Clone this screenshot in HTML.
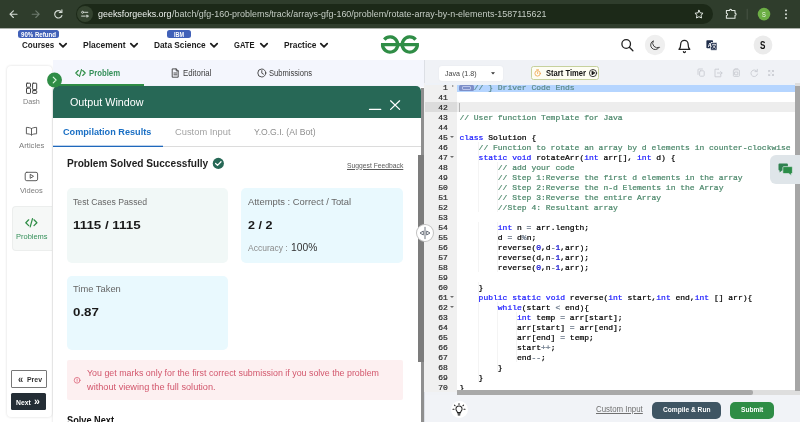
<!DOCTYPE html>
<html lang="en"><head><meta charset="utf-8"><title>Rotate Array | Practice | GeeksforGeeks</title>
<style>
*{box-sizing:border-box;margin:0;padding:0}
html,body{width:800px;height:422px;overflow:hidden;background:#fff;font-family:"Liberation Sans",sans-serif}
#root{position:absolute;left:0;top:0;width:800px;height:422px;overflow:hidden;will-change:transform}
.a{position:absolute}
.t{position:absolute;white-space:nowrap;line-height:1;transform-origin:0 50%;display:block}
svg{position:absolute;overflow:visible}
#chrome{left:0;top:0;width:800px;height:28.4px;background:#2f3d2c}
#pill{left:76.3px;top:4.2px;width:637px;height:19.8px;border-radius:10px;background:#1c2918}
#nav{left:0;top:29px;width:800px;height:31px;background:#fff}
#side{left:6.6px;top:66.4px;width:45.2px;height:350.4px;background:#fff;border-radius:4px;box-shadow:0 0 2.5px rgba(0,0,0,.16)}
#tabs{left:52.5px;top:59.6px;width:371.7px;height:27px;background:#f4f6fd}
#ow{left:52.5px;top:86px;width:368.6px;height:340px;background:#fff;border-radius:5px 5px 0 0;overflow:hidden;box-shadow:-1px 0 2px rgba(0,0,0,.07)}
#owh{left:0;top:0;width:100%;height:32.1px;background:#276856}
.card{border-radius:5px}
#ed{left:425px;top:83px;width:375px;height:312.4px;background:linear-gradient(90deg,#f0f2f6 32px,#fff 32px);overflow:hidden}
#gut{left:0;top:0;width:32px;height:308.6px;background:#f0f0f0}
.ln{position:absolute;left:0;width:375px;height:10px;white-space:pre;font-family:"Liberation Mono",monospace;font-size:8px;line-height:10px;color:#000;-webkit-text-stroke:0.22px}
.ln i{font-style:normal;position:absolute;top:1.1px;left:0;width:22.8px;text-align:right;color:#2a2a2a}
.ln b{font-weight:400;position:absolute;top:1.1px;left:34.4px}
.k{color:#1a1aff}.c{color:#4c886b}.n{color:#0000cd}.o{color:#687687}
.fold{position:absolute;left:25.4px;top:4.2px;width:0;height:0;border-left:2px solid transparent;border-right:2px solid transparent;border-top:2.8px solid #6e6e6e}
</style></head>
<body>
<div id="root">
<div class="a" id="chrome"></div><div class="a" style="left:0;top:28px;width:800px;height:1px;background:#acb1ab"></div><div class="a" id="pill"></div>
<div class="a" style="left:77px;top:6px;width:16.4px;height:16.4px;border-radius:50%;background:#34432f"></div>
<svg width="800" height="29" viewBox="0 0 800 29" style="left:0;top:0" fill="none" stroke-linecap="round" stroke-linejoin="round">
<g stroke="#d3dad3" stroke-width="1.15"><path d="M17 14.2H10.2M13.4 10.9L10 14.2l3.4 3.3"/></g>
<g stroke="#6d7a6d" stroke-width="1.15"><path d="M32.2 14.2H39M35.8 10.9l3.4 3.3-3.4 3.3"/></g>
<g stroke="#d3dad3" stroke-width="1.15"><path d="M61.500 12.300A3.700 3.700 0 1 0 61.900 15.500"/><path d="M61.900 9.900v2.600h-2.600" /></g>
<g stroke="#d3dad3" stroke-width="1"><path d="M84.6 12.3h3.2M81.6 16.1h3.2"/><circle cx="82.6" cy="12.3" r="1"/><circle cx="87" cy="16.1" r="1"/></g>
<path d="M699 10.3l1.25 2.55 2.8.4-2.03 1.97.48 2.78-2.5-1.32-2.5 1.32.48-2.78-2.03-1.97 2.8-.4z" stroke="#e2e8e2" stroke-width="1"/>
<path d="M726.400 10.500h3.100a1.100 1.100 0 0 1 2.200 0h3.300v2.600a1.100 1.100 0 0 1 0 2.200v3h-8.600v-2.800a1.100 1.100 0 0 0 0-2.200z" stroke="#dfe6df" stroke-width="1.050"/>
<path d="M747.2 9.2v10" stroke="#4c5a4b" stroke-width="0.8"/>
<circle cx="764" cy="14.1" r="6.3" fill="#6cae45"/>
<g fill="#e2e8e2"><circle cx="786" cy="10.4" r="0.95"/><circle cx="786" cy="14.2" r="0.95"/><circle cx="786" cy="18" r="0.95"/></g>
</svg>
<span class="t" style="left:97.90px;top:10.32px;font-size:8.6px;color:#eef2ee;transform:scaleX(1.0396);">geeksforgeeks.org</span>
<span class="t" style="left:171.60px;top:10.32px;font-size:8.6px;color:#c5cdc5;transform:scaleX(1.0400);">/batch/gfg-160-problems/track/arrays-gfg-160/problem/rotate-array-by-n-elements-1587115621</span>
<span class="t" style="left:762.10px;top:11.68px;font-size:6.4px;color:#eef7e8;transform:scaleX(0.8908);">S</span>
<div class="a" id="nav"></div>
<div class="a" style="left:17.5px;top:30px;width:41.5px;height:8.3px;border-radius:2.5px;background:#4161b8"></div>
<div class="a" style="left:167px;top:30px;width:23.5px;height:8.3px;border-radius:2.5px;background:#4161b8"></div>
<span class="t" style="left:20.60px;top:31.63px;font-size:6.7px;color:#fff;font-weight:700;transform:scaleX(0.9143);">90% Refund</span>
<span class="t" style="left:174.00px;top:31.63px;font-size:6.7px;color:#fff;font-weight:700;transform:scaleX(0.8153);">IBM</span>
<span class="t" style="left:21.60px;top:39.67px;font-size:9.6px;color:#1d1d1d;font-weight:700;transform:scaleX(0.8387);">Courses</span>
<svg width="10" height="8" style="left:59px;top:42px" fill="none"><path d="M0.8 1.7L4 4.9 7.2 1.7" stroke="#1d1d1d" stroke-width="1.8" stroke-linecap="round" stroke-linejoin="round"/></svg>
<span class="t" style="left:82.50px;top:39.67px;font-size:9.6px;color:#1d1d1d;font-weight:700;transform:scaleX(0.8854);">Placement</span>
<svg width="10" height="8" style="left:129.6px;top:42px" fill="none"><path d="M0.8 1.7L4 4.9 7.2 1.7" stroke="#1d1d1d" stroke-width="1.8" stroke-linecap="round" stroke-linejoin="round"/></svg>
<span class="t" style="left:153.80px;top:39.67px;font-size:9.6px;color:#1d1d1d;font-weight:700;transform:scaleX(0.8655);">Data Science</span>
<svg width="10" height="8" style="left:210px;top:42px" fill="none"><path d="M0.8 1.7L4 4.9 7.2 1.7" stroke="#1d1d1d" stroke-width="1.8" stroke-linecap="round" stroke-linejoin="round"/></svg>
<span class="t" style="left:234.00px;top:39.67px;font-size:9.6px;color:#1d1d1d;font-weight:700;transform:scaleX(0.7904);">GATE</span>
<svg width="10" height="8" style="left:260px;top:42px" fill="none"><path d="M0.8 1.7L4 4.9 7.2 1.7" stroke="#1d1d1d" stroke-width="1.8" stroke-linecap="round" stroke-linejoin="round"/></svg>
<span class="t" style="left:283.50px;top:39.67px;font-size:9.6px;color:#1d1d1d;font-weight:700;transform:scaleX(0.8703);">Practice</span>
<svg width="10" height="8" style="left:320.4px;top:42px" fill="none"><path d="M0.8 1.7L4 4.9 7.2 1.7" stroke="#1d1d1d" stroke-width="1.8" stroke-linecap="round" stroke-linejoin="round"/></svg>
<svg width="800" height="62" viewBox="0 0 800 62" style="left:0;top:0" fill="none" stroke="#2f8d46" stroke-width="3.3" stroke-linecap="butt">
<path d="M384.3 39.6A7.6 7.6 0 1 1 382.5 44.6"/>
<path d="M415.6 39.6A7.6 7.6 0 1 0 417.4 44.6"/>
<path d="M381 44.6H418.9"/>
</svg>
<svg width="800" height="62" viewBox="0 0 800 62" style="left:0;top:0" fill="none" stroke-linecap="round" stroke-linejoin="round">
<circle cx="655" cy="45" r="10.2" fill="#efefef"/>
<circle cx="763" cy="45" r="9.4" fill="#ebebeb"/>
<g stroke="#222" stroke-width="1.3"><circle cx="626.2" cy="44" r="4.3"/><path d="M629.4 47.2l3.5 3.5"/></g>
<path d="M659.2 47.4A4.6 4.6 0 0 1 653.400 40.800a4.600 4.600 0 1 0 5.800 6.600z" stroke="#444" stroke-width="1"/>
<g stroke="#222" stroke-width="1.25"><path d="M679 49.300h10.800c-1.400-1.100-1.700-2.400-1.700-5.300a3.700 3.700 0 0 0-7.400 0c0 2.900-.3 4.200-1.700 5.300z"/><path d="M683.400 51.500a1 1 0 0 0 2 0"/></g>
<g><rect x="706.4" y="40.3" width="6.6" height="8" rx="0.8" fill="#1f2d4a"/><rect x="710.6" y="42.6" width="6.4" height="7.6" rx="0.8" fill="#1f2d4a" stroke="#fff" stroke-width="0.7"/></g>
</svg>
<span class="t" style="left:707.80px;top:42.66px;font-size:5.6px;color:#fff;font-weight:700;">A</span>
<svg width="8" height="8" style="left:710px;top:42.4px" fill="none" stroke="#fff" stroke-width="0.7"><path d="M2 2.6h4M4 1.6v1M5.4 2.6C5 4.6 3.8 5.8 2.2 6.4M2.9 3.4C3.4 4.8 4.6 5.9 6 6.4"/></svg>
<span class="t" style="left:760.40px;top:40.53px;font-size:10px;color:#111;font-weight:700;transform:scaleX(0.8094);">S</span>
<div class="a" id="side"></div>
<div class="a" style="left:12.3px;top:206.4px;width:39.5px;height:44.3px;border-radius:4px 0 0 4px;background:#f6f8f7;border:0.6px solid #eceeed;border-right:0"></div>
<svg width="60" height="422" viewBox="0 0 60 422" style="left:0;top:0" fill="none" stroke-linecap="round" stroke-linejoin="round">
<g stroke="#444" stroke-width="1"><rect x="26.5" y="83.2" width="4" height="4" rx="0.6"/><rect x="32.600" y="83.2" width="4.100" height="6.400" rx="0.6"/><rect x="26.5" y="88.200" width="4" height="5.200" rx="0.6"/><rect x="32.600" y="90.600" width="4.100" height="2.800" rx="0.6"/></g>
<g stroke="#555" stroke-width="0.95"><path d="M31.5 128.6v6.4M31.5 128.6c-1.2-.9-3-1.2-5.1-1.2v6.4c2.100 0 3.900.3 5.100 1.200c1.200-.9 3-1.200 5.100-1.200v-6.400c-2.100 0-3.900.3-5.100 1.200z"/></g>
<g stroke="#555" stroke-width="0.95"><rect x="25.2" y="172.3" width="12.4" height="8.4" rx="1.6"/><path d="M30.200 174.700v3.600l3-1.800z"/></g>
<g stroke="#2f8d46" stroke-width="1.25"><path d="M28.7 219.800l-2.900 2.900 2.900 2.900M34 219.800l2.900 2.900-2.900 2.900M32.500 218.600l-2.300 8.200"/></g>
</svg>
<span class="t" style="left:22.90px;top:98.07px;font-size:7.6px;color:#7d7d7d;transform:scaleX(0.9530);">Dash</span>
<span class="t" style="left:18.50px;top:141.97px;font-size:7.6px;color:#7d7d7d;transform:scaleX(1.0198);">Articles</span>
<span class="t" style="left:19.90px;top:187.37px;font-size:7.6px;color:#7d7d7d;transform:scaleX(0.9873);">Videos</span>
<span class="t" style="left:15.60px;top:232.87px;font-size:7.6px;color:#35905a;transform:scaleX(0.9851);">Problems</span>
<div class="a" style="left:10.7px;top:370px;width:35.900px;height:17.900px;background:#fff;border:0.9px solid #777;border-radius:1px"></div>
<div class="a" style="left:11.1px;top:393.300px;width:35px;height:17.100px;background:#242d35;border-radius:1.5px"></div>
<span class="t" style="left:17.80px;top:373.51px;font-size:10.5px;color:#333;font-weight:700;transform:scaleX(0.8898);">«</span>
<span class="t" style="left:26.50px;top:375.83px;font-size:8px;color:#333;font-weight:700;transform:scaleX(0.8641);">Prev</span>
<span class="t" style="left:16.10px;top:398.53px;font-size:8px;color:#fff;font-weight:700;transform:scaleX(0.8476);">Next</span>
<span class="t" style="left:33.90px;top:396.21px;font-size:10.5px;color:#fff;font-weight:700;transform:scaleX(1.0096);">»</span>
<div class="a" id="tabs"></div>
<div class="a" style="left:52.5px;top:83.900px;width:91.500px;height:1.700px;background:#2f8d46"></div>
<svg width="430" height="90" viewBox="0 0 430 90" style="left:0;top:0" fill="none" stroke-linecap="round" stroke-linejoin="round">
<g stroke="#2f8d46" stroke-width="1.15"><path d="M78.300 70.500l-2.500 2.500 2.500 2.500M82.700 70.500l2.500 2.500-2.500 2.500M81.500 69.600l-2 6.800"/></g>
<g stroke="#333" stroke-width="0.85"><path d="M172.600 68.900h3.600l2 2v6.300h-5.600zM176.200 68.900v2h2M173.900 73h3M173.900 74.800h3"/></g>
<g stroke="#333" stroke-width="0.85"><circle cx="261.800" cy="73" r="4"/><path d="M261.800 70.600v2.600l1.700 1"/></g>
</svg>
<span class="t" style="left:88.50px;top:69.09px;font-size:8.4px;color:#35905a;font-weight:700;transform:scaleX(0.9279);">Problem</span>
<span class="t" style="left:183.00px;top:68.99px;font-size:8.4px;color:#3c3c3c;transform:scaleX(0.9384);">Editorial</span>
<span class="t" style="left:269.40px;top:68.99px;font-size:8.4px;color:#3c3c3c;transform:scaleX(0.9056);">Submissions</span>
<div class="a" id="ow"><div class="a" id="owh"></div><div class="a" style="left:0;top:60px;width:100%;height:0.9px;background:#dcdcdc"></div><div class="a" style="left:0;top:59px;width:110.100px;height:1px;background:rgba(31,104,188,.3)"></div><div class="a" style="left:0;top:60px;width:110.100px;height:1px;background:#1f68bc"></div><div class="a card" style="left:14.600px;top:102.300px;width:161.300px;height:74.300px;background:#f1f8f7"></div><div class="a card" style="left:188.800px;top:102.300px;width:161.600px;height:74.300px;background:#e9f9fe"></div><div class="a card" style="left:14.600px;top:189.600px;width:161.300px;height:74.800px;background:#e9f9fe"></div><div class="a" style="left:14.600px;top:274px;width:335.800px;height:40.300px;background:#fdf0f1;border-radius:2px"></div></div>
<span class="t" style="left:70.10px;top:97.11px;font-size:10.5px;color:#fff;transform:scaleX(1.0251);">Output Window</span>
<svg width="430" height="422" viewBox="0 0 430 422" style="left:0;top:0" fill="none" stroke-linecap="round" stroke-linejoin="round">
<path d="M369.400 109.400h11.400" stroke="#fff" stroke-width="1.100"/>
<path d="M390.600 100.800l9 8.600M399.600 100.800l-9 8.600" stroke="#fff" stroke-width="1.250"/>
<circle cx="218.300" cy="163.400" r="5.600" fill="#276856"/>
<path d="M215.600 163.500l1.900 1.900 3.500-3.700" stroke="#fff" stroke-width="1.300"/>
<circle cx="77.100" cy="380.300" r="2.900" stroke="#d9536a" stroke-width="0.700"/>
<path d="M77.100 379v1.500M77.100 381.700v.1" stroke="#d9536a" stroke-width="0.700"/>
</svg>
<span class="t" style="left:63.00px;top:127.00px;font-size:9.8px;color:#1a6fc4;font-weight:700;transform:scaleX(0.9322);">Compilation Results</span>
<span class="t" style="left:174.90px;top:127.00px;font-size:9.8px;color:#a3a3a3;transform:scaleX(0.9525);">Custom Input</span>
<span class="t" style="left:253.90px;top:127.00px;font-size:9.8px;color:#8e8e8e;transform:scaleX(0.8778);">Y.O.G.I. (AI Bot)</span>
<span class="t" style="left:67.10px;top:158.88px;font-size:10.3px;color:#1f1f1f;font-weight:700;transform:scaleX(0.9830);">Problem Solved Successfully</span>
<span class="t" style="left:346.60px;top:161.50px;font-size:7.8px;color:#5a5a5a;transform:scaleX(0.8657);text-decoration:underline;text-decoration-thickness:0.6px;text-underline-offset:1px;">Suggest Feedback</span>
<span class="t" style="left:73.40px;top:196.97px;font-size:9.6px;color:#666;transform:scaleX(0.9023);">Test Cases Passed</span>
<span class="t" style="left:73.40px;top:219.00px;font-size:11.7px;color:#1a1a1a;font-weight:700;transform:scaleX(1.1424);">1115 / 1115</span>
<span class="t" style="left:247.60px;top:196.97px;font-size:9.6px;color:#666;transform:scaleX(0.9773);">Attempts : Correct / Total</span>
<span class="t" style="left:247.60px;top:219.00px;font-size:11.7px;color:#1a1a1a;font-weight:700;transform:scaleX(1.0725);">2 / 2</span>
<span class="t" style="left:247.60px;top:243.95px;font-size:8.8px;color:#8a8a8a;transform:scaleX(0.9665);">Accuracy :</span>
<span class="t" style="left:291.00px;top:242.68px;font-size:10.3px;color:#333;">100%</span>
<span class="t" style="left:73.40px;top:284.27px;font-size:9.6px;color:#666;transform:scaleX(0.9743);">Time Taken</span>
<span class="t" style="left:73.40px;top:306.40px;font-size:11.7px;color:#1a1a1a;font-weight:700;transform:scaleX(1.1385);">0.87</span>
<span class="t" style="left:87.00px;top:369.08px;font-size:9px;color:#d2566c;transform:scaleX(0.9855);">You get marks only for the first correct submission if you solve the problem</span>
<span class="t" style="left:87.00px;top:383.08px;font-size:9px;color:#d2566c;transform:scaleX(1.0200);">without viewing the full solution.</span>
<span class="t" style="left:67.10px;top:415.78px;font-size:10.3px;color:#111;font-weight:700;transform:scaleX(0.8926);">Solve Next</span>
<svg width="20" height="20" viewBox="0 0 20 20" style="left:44.1px;top:70.4px" fill="none" stroke-linecap="round" stroke-linejoin="round"><circle cx="10.5" cy="10" r="7.45" fill="#2f8d46"/><path d="M9.200 7.100l2.900 2.900-2.900 2.900" stroke="#d9f7dd" stroke-width="1.100"/></svg>
<div class="a" style="left:421.400px;top:87.500px;width:2.900px;height:340px;background:#8f8f8f"></div>
<div class="a" style="left:418.400px;top:155.200px;width:5.900px;height:206.600px;background:#7c7c7c"></div>
<div class="a" style="left:424.2px;top:59.6px;width:376px;height:363px;background:#f0f2f6;border-left:0.8px solid #dcdfe5"></div>
<div class="a" style="left:439.400px;top:65.600px;width:63.200px;height:15.100px;background:#fff;border-radius:3px;box-shadow:0 0 2px rgba(0,0,0,.05)"></div>
<div class="a" style="left:531px;top:65.800px;width:67.600px;height:14.400px;background:#fdfdf3;border:0.8px solid #c6d19c;border-radius:2.500px"></div>
<span class="t" style="left:444.60px;top:69.90px;font-size:7.8px;color:#444;transform:scaleX(0.9114);">Java (1.8)</span>
<span class="t" style="left:546.00px;top:69.47px;font-size:8.3px;color:#111;font-weight:700;transform:scaleX(0.9140);">Start Timer</span>
<svg width="800" height="90" viewBox="0 0 800 90" style="left:0;top:0" fill="none" stroke-linecap="round" stroke-linejoin="round">
<path d="M491 72.200h4l-2 2.300z" fill="#333" stroke="none"/>
<g stroke="#f0a24a" stroke-width="0.800"><circle cx="537.600" cy="73.400" r="2.700"/><path d="M536.600 69.800h2M537.600 72v1.500"/></g>
<g stroke="#111" stroke-width="0.800"><circle cx="593" cy="73.100" r="3.600"/><path d="M592 71.400v3.400l2.600-1.700z" fill="#111"/></g>
<g stroke="#c9ccd2" stroke-width="0.900">
<rect x="699.600" y="70.800" width="4.600" height="5.400" rx="0.800"/><path d="M698 74.400v-4.600a.8.800 0 0 1 .8-.8h3.600"/>
<path d="M718.400 69.200h-3.400v7.600h5.800v-2.200M718.400 69.200v0M717.400 73h4.600M720.600 71.600l1.500 1.400-1.500 1.400"/>
<rect x="733.400" y="69.800" width="6" height="6.600" rx="0.800"/><rect x="735" y="72" width="2.800" height="2.800"/><path d="M735 68.800h2.800"/>
<path d="M757 71.400a3.300 3.300 0 1 0 .5 2.600M757.300 69.300v2.300h-2.300"/>
<path d="M768.800 70.600l1.400 1.400M773.400 70.600l-1.400 1.400M768.800 75.400l1.400-1.400M773.400 75.400l-1.400-1.400M768.700 71.700v-1.200h1.200M772.300 70.500h1.200v1.200M768.700 74.300v1.200h1.200M772.300 75.500h1.200v-1.200"/>
</g>
</svg>
<div class="a" style="left:424.200px;top:83px;width:1.200px;height:308.600px;background:#f0f0f0"></div><div class="a" id="ed"><div class="a" id="gut"></div><div class="a" style="left:32px;top:1.900px;width:338.200px;height:7px;background:#b5d5ff"></div><div class="a" style="left:0;top:19.25px;width:32px;height:10.0px;background:#dcdcdc"></div><div class="a" style="left:32px;top:19.25px;width:338.200px;height:10.0px;background:#ededed"></div><div class="a" style="left:33.800px;top:19.75px;width:0.700px;height:9.0px;background:#b4b4b4"></div><div class="a" style="left:53.00px;top:59.25px;width:0.6px;height:10.0px;background:rgba(0,0,0,.045)"></div><div class="a" style="left:53.00px;top:69.25px;width:0.6px;height:10.0px;background:rgba(0,0,0,.045)"></div><div class="a" style="left:53.00px;top:79.25px;width:0.6px;height:10.0px;background:rgba(0,0,0,.045)"></div><div class="a" style="left:72.20px;top:79.25px;width:0.6px;height:10.0px;background:rgba(0,0,0,.045)"></div><div class="a" style="left:53.00px;top:89.25px;width:0.6px;height:10.0px;background:rgba(0,0,0,.045)"></div><div class="a" style="left:72.20px;top:89.25px;width:0.6px;height:10.0px;background:rgba(0,0,0,.045)"></div><div class="a" style="left:53.00px;top:99.25px;width:0.6px;height:10.0px;background:rgba(0,0,0,.045)"></div><div class="a" style="left:72.20px;top:99.25px;width:0.6px;height:10.0px;background:rgba(0,0,0,.045)"></div><div class="a" style="left:53.00px;top:109.25px;width:0.6px;height:10.0px;background:rgba(0,0,0,.045)"></div><div class="a" style="left:72.20px;top:109.25px;width:0.6px;height:10.0px;background:rgba(0,0,0,.045)"></div><div class="a" style="left:53.00px;top:119.25px;width:0.6px;height:10.0px;background:rgba(0,0,0,.045)"></div><div class="a" style="left:72.20px;top:119.25px;width:0.6px;height:10.0px;background:rgba(0,0,0,.045)"></div><div class="a" style="left:53.00px;top:139.25px;width:0.6px;height:10.0px;background:rgba(0,0,0,.045)"></div><div class="a" style="left:72.20px;top:139.25px;width:0.6px;height:10.0px;background:rgba(0,0,0,.045)"></div><div class="a" style="left:53.00px;top:149.25px;width:0.6px;height:10.0px;background:rgba(0,0,0,.045)"></div><div class="a" style="left:72.20px;top:149.25px;width:0.6px;height:10.0px;background:rgba(0,0,0,.045)"></div><div class="a" style="left:53.00px;top:159.25px;width:0.6px;height:10.0px;background:rgba(0,0,0,.045)"></div><div class="a" style="left:72.20px;top:159.25px;width:0.6px;height:10.0px;background:rgba(0,0,0,.045)"></div><div class="a" style="left:53.00px;top:169.25px;width:0.6px;height:10.0px;background:rgba(0,0,0,.045)"></div><div class="a" style="left:72.20px;top:169.25px;width:0.6px;height:10.0px;background:rgba(0,0,0,.045)"></div><div class="a" style="left:53.00px;top:179.25px;width:0.6px;height:10.0px;background:rgba(0,0,0,.045)"></div><div class="a" style="left:72.20px;top:179.25px;width:0.6px;height:10.0px;background:rgba(0,0,0,.045)"></div><div class="a" style="left:53.00px;top:199.25px;width:0.6px;height:10.0px;background:rgba(0,0,0,.045)"></div><div class="a" style="left:53.00px;top:209.25px;width:0.6px;height:10.0px;background:rgba(0,0,0,.045)"></div><div class="a" style="left:53.00px;top:219.25px;width:0.6px;height:10.0px;background:rgba(0,0,0,.045)"></div><div class="a" style="left:72.20px;top:219.25px;width:0.6px;height:10.0px;background:rgba(0,0,0,.045)"></div><div class="a" style="left:53.00px;top:229.25px;width:0.6px;height:10.0px;background:rgba(0,0,0,.045)"></div><div class="a" style="left:72.20px;top:229.25px;width:0.6px;height:10.0px;background:rgba(0,0,0,.045)"></div><div class="a" style="left:91.40px;top:229.25px;width:0.6px;height:10.0px;background:rgba(0,0,0,.045)"></div><div class="a" style="left:53.00px;top:239.25px;width:0.6px;height:10.0px;background:rgba(0,0,0,.045)"></div><div class="a" style="left:72.20px;top:239.25px;width:0.6px;height:10.0px;background:rgba(0,0,0,.045)"></div><div class="a" style="left:91.40px;top:239.25px;width:0.6px;height:10.0px;background:rgba(0,0,0,.045)"></div><div class="a" style="left:53.00px;top:249.25px;width:0.6px;height:10.0px;background:rgba(0,0,0,.045)"></div><div class="a" style="left:72.20px;top:249.25px;width:0.6px;height:10.0px;background:rgba(0,0,0,.045)"></div><div class="a" style="left:91.40px;top:249.25px;width:0.6px;height:10.0px;background:rgba(0,0,0,.045)"></div><div class="a" style="left:53.00px;top:259.25px;width:0.6px;height:10.0px;background:rgba(0,0,0,.045)"></div><div class="a" style="left:72.20px;top:259.25px;width:0.6px;height:10.0px;background:rgba(0,0,0,.045)"></div><div class="a" style="left:91.40px;top:259.25px;width:0.6px;height:10.0px;background:rgba(0,0,0,.045)"></div><div class="a" style="left:53.00px;top:269.25px;width:0.6px;height:10.0px;background:rgba(0,0,0,.045)"></div><div class="a" style="left:72.20px;top:269.25px;width:0.6px;height:10.0px;background:rgba(0,0,0,.045)"></div><div class="a" style="left:91.40px;top:269.25px;width:0.6px;height:10.0px;background:rgba(0,0,0,.045)"></div><div class="a" style="left:53.00px;top:279.25px;width:0.6px;height:10.0px;background:rgba(0,0,0,.045)"></div><div class="a" style="left:72.20px;top:279.25px;width:0.6px;height:10.0px;background:rgba(0,0,0,.045)"></div><div class="a" style="left:53.00px;top:289.25px;width:0.6px;height:10.0px;background:rgba(0,0,0,.045)"></div><div class="ln" style="top:-0.75px"><i>1</i><u class="fold" style="border-top:1.800px solid transparent;border-bottom:1.800px solid transparent;border-left:2.600px solid #888;border-right:0;top:3px;left:26.600px"></u><b><span style="position:absolute;left:-0.2px;top:1.9px;width:14.5px;height:5.5px;background:#7d8fc8;border-radius:1.5px"></span><span style="position:absolute;left:2.4px;top:3px;width:9.4px;height:3.2px;border:0.7px solid #b9c4ea;border-radius:1px"></span><span class="c" style="color:#5a8a8c;margin-left:14.4px">// } Driver Code Ends</span></b></div><div class="ln" style="top:9.25px"><i>41</i><b></b></div><div class="ln" style="top:19.25px"><i>42</i><b></b></div><div class="ln" style="top:29.25px"><i>43</i><b><span class="c">// User function Template for Java</span></b></div><div class="ln" style="top:39.25px"><i>44</i><b></b></div><div class="ln" style="top:49.25px"><i>45</i><u class="fold"></u><b><span class="k">class</span> Solution {</b></div><div class="ln" style="top:59.25px"><i>46</i><b>    <span class="c">// Function to rotate an array by d elements in counter-clockwise</span></b></div><div class="ln" style="top:69.25px"><i>47</i><u class="fold"></u><b>    <span class="k">static</span> <span class="k">void</span> rotateArr(<span class="k">int</span> arr[], <span class="k">int</span> d) {</b></div><div class="ln" style="top:79.25px"><i>48</i><b>        <span class="c">// add your code</span></b></div><div class="ln" style="top:89.25px"><i>49</i><b>        <span class="c">// Step 1:Reverse the first d elements in the array</span></b></div><div class="ln" style="top:99.25px"><i>50</i><b>        <span class="c">// Step 2:Reverse the n-d Elements in the Array</span></b></div><div class="ln" style="top:109.25px"><i>51</i><b>        <span class="c">// Step 3:Reverse the entire Array</span></b></div><div class="ln" style="top:119.25px"><i>52</i><b>        <span class="c">//Step 4: Resultant array</span></b></div><div class="ln" style="top:129.25px"><i>53</i><b></b></div><div class="ln" style="top:139.25px"><i>54</i><b>        <span class="k">int</span> n <span class="o">=</span> arr.length;</b></div><div class="ln" style="top:149.25px"><i>55</i><b>        d <span class="o">=</span> d<span class="o">%</span>n;</b></div><div class="ln" style="top:159.25px"><i>56</i><b>        reverse(<span class="n">0</span>,d<span class="o">-</span><span class="n">1</span>,arr);</b></div><div class="ln" style="top:169.25px"><i>57</i><b>        reverse(d,n<span class="o">-</span><span class="n">1</span>,arr);</b></div><div class="ln" style="top:179.25px"><i>58</i><b>        reverse(<span class="n">0</span>,n<span class="o">-</span><span class="n">1</span>,arr);</b></div><div class="ln" style="top:189.25px"><i>59</i><b></b></div><div class="ln" style="top:199.25px"><i>60</i><b>    }</b></div><div class="ln" style="top:209.25px"><i>61</i><u class="fold"></u><b>    <span class="k">public</span> <span class="k">static</span> <span class="k">void</span> reverse(<span class="k">int</span> start,<span class="k">int</span> end,<span class="k">int</span> [] arr){</b></div><div class="ln" style="top:219.25px"><i>62</i><u class="fold"></u><b>        <span class="k">while</span>(start <span class="o">&lt;</span> end){</b></div><div class="ln" style="top:229.25px"><i>63</i><b>            <span class="k">int</span> temp <span class="o">=</span> arr[start];</b></div><div class="ln" style="top:239.25px"><i>64</i><b>            arr[start] <span class="o">=</span> arr[end];</b></div><div class="ln" style="top:249.25px"><i>65</i><b>            arr[end] <span class="o">=</span> temp;</b></div><div class="ln" style="top:259.25px"><i>66</i><b>            start<span class="o">++</span>;</b></div><div class="ln" style="top:269.25px"><i>67</i><b>            end<span class="o">--</span>;</b></div><div class="ln" style="top:279.25px"><i>68</i><b>        }</b></div><div class="ln" style="top:289.25px"><i>69</i><b>    }</b></div><div class="ln" style="top:299.25px"><i>70</i><b>}</b></div><div class="a" style="left:0;top:0;width:375px;height:2px;background:#eef2f8"></div><div class="a" style="left:32px;top:307.400px;width:343px;height:5px;background:#dedede"></div><div class="a" style="left:32px;top:307.400px;width:296px;height:5px;background:#a9a9a9;border-radius:0 2px 2px 0"></div><div class="a" style="left:370.200px;top:0;width:4.800px;height:312.400px;background:#dedede"></div><div class="a" style="left:370.200px;top:3px;width:4.800px;height:305.300px;background:#a6a6a6"></div></div>
<div class="a" style="left:769.600px;top:154.600px;width:31px;height:29.700px;background:#dfe5e9;border-radius:6px 0 0 6px"></div>
<svg width="16" height="14" viewBox="0 0 16 14" style="left:777.600px;top:163.200px"><path d="M1.500 0.600h7.400a1 1 0 0 1 1 1v4.800a1 1 0 0 1-1 1H4l-2.400 2v-2h-.1a1 1 0 0 1-1-1V1.600a1 1 0 0 1 1-1z" fill="#2f8150"/><path d="M5.800 3.600h7.600a1 1 0 0 1 1 1v5a1 1 0 0 1-1 1h-.2v2l-2.400-2H5.800a1 1 0 0 1-1-1v-5a1 1 0 0 1 1-1z" fill="#2b8d48" stroke="#dfe5e9" stroke-width="0.700"/></svg>
<div class="a" style="left:425px;top:395.4px;width:375px;height:27px;background:#f1f3f7"></div>
<div class="a" style="left:450.700px;top:400.700px;width:17.400px;height:17.400px;border-radius:50%;background:#fff"></div>
<svg width="18" height="18" viewBox="0 0 16 16" style="left:450.400px;top:400.500px" fill="none" stroke="#222" stroke-width="0.9" stroke-linecap="round" stroke-linejoin="round">
<path d="M6.600 10.200c0-1-1.300-1.500-1.300-3.100a2.700 2.700 0 0 1 5.400 0c0 1.600-1.300 2.100-1.300 3.100zM6.900 11.400h2.200M7.300 12.500h1.400"/>
<path d="M8 2.200v1M3.900 3.600l.7.700M12.100 3.600l-.7.700M2.600 7.300h1M12.400 7.300h1"/>
</svg>
<span class="t" style="left:596.20px;top:405.76px;font-size:8.2px;color:#707070;transform:scaleX(0.9609);text-decoration:underline;text-decoration-thickness:0.6px;text-underline-offset:1px;">Custom Input</span>
<div class="a" style="left:652.300px;top:401.700px;width:68.600px;height:17.300px;background:#3f5563;border-radius:5px"></div>
<div class="a" style="left:729.900px;top:401.700px;width:44px;height:17.300px;background:#2f8d46;border-radius:5px"></div>
<span class="t" style="left:663.00px;top:406.43px;font-size:8px;color:#fff;font-weight:700;transform:scaleX(0.8283);">Compile &amp; Run</span>
<span class="t" style="left:740.70px;top:406.43px;font-size:8px;color:#fff;font-weight:700;transform:scaleX(0.8226);">Submit</span>
<div class="a" style="left:416.100px;top:223.500px;width:18.400px;height:18.600px;border-radius:50%;background:#fff;border:0.9px solid #c2c2c2"></div>
<svg width="20" height="20" viewBox="0 0 20 20" style="left:415.300px;top:222.800px" fill="none" stroke="#5d6470" stroke-width="0.9" stroke-linejoin="round"><path d="M10 3.900v12.200"/><path d="M8.300 8v4L5 10zM11.700 8v4L15 10z"/></svg>
</div>
</body></html>
